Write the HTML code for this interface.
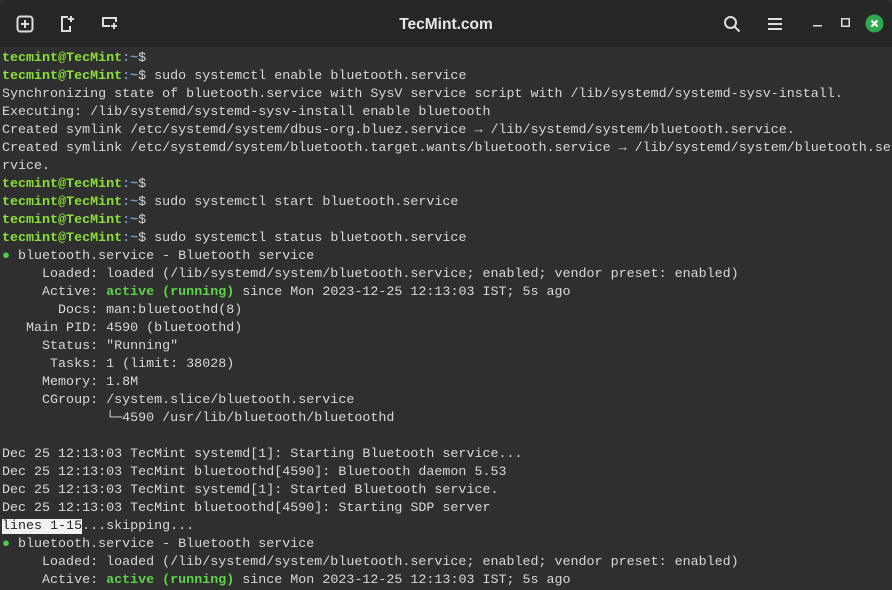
<!DOCTYPE html>
<html><head><meta charset="utf-8"><style>
html,body{margin:0;padding:0;width:892px;height:579px;overflow:hidden;background:#2f2f2f}
.tb{position:absolute;left:0;top:0;width:892px;height:47px;background:#262626;border-radius:8px 8px 0 0}
.title{position:absolute;left:0;width:892px;top:16px;text-align:center;color:#e8e8e8;font:bold 15.5px "Liberation Sans",sans-serif}
.term{position:absolute;left:2px;top:50px;font-family:"Liberation Mono",monospace;font-size:13.35px;line-height:18px;color:#d8d8d8;white-space:pre}
.g{color:#8ae234;font-weight:bold}.b{color:#729fcf;font-weight:bold}.a{color:#5fd34a;font-weight:bold}.d{color:#4ec94a}
.hl{background:#f2f2f2;color:#222}
svg{position:absolute}
</style></head><body>
<div class="tb"></div>
<div class="title">TecMint.com</div>
<svg style="left:16px;top:15px" width="18" height="18" viewBox="0 0 18 18"><rect x="1.5" y="1.5" width="15" height="15" rx="3" fill="none" stroke="#ddd" stroke-width="2"/><path d="M9 5v8M5 9h8" stroke="#ddd" stroke-width="2"/></svg>
<svg style="left:60px;top:15px" width="16" height="18" viewBox="0 0 16 18"><path d="M8 2H2v14h8v-5" fill="none" stroke="#ddd" stroke-width="2"/><path d="M11 1v6M8 4h6" stroke="#ddd" stroke-width="2"/></svg>
<svg style="left:101px;top:16px" width="18" height="14" viewBox="0 0 18 14"><path d="M9 10H2V2h13v4" fill="none" stroke="#ddd" stroke-width="2"/><path d="M13 7v6M10 10h6" stroke="#ddd" stroke-width="2"/></svg>
<svg style="left:723px;top:15px" width="18" height="18" viewBox="0 0 18 18"><circle cx="7.5" cy="7.5" r="5.5" fill="none" stroke="#ddd" stroke-width="2"/><path d="M11.5 11.5l5 5" stroke="#ddd" stroke-width="2"/></svg>
<svg style="left:767px;top:17px" width="16" height="14" viewBox="0 0 16 14"><path d="M1 2h14M1 7h14M1 12h14" stroke="#ddd" stroke-width="2"/></svg>
<svg style="left:813px;top:25px" width="10" height="2"><rect width="9" height="1.5" fill="#ddd"/></svg>
<svg style="left:841px;top:18px" width="10" height="10"><rect x="0.75" y="0.75" width="7.5" height="7.5" fill="none" stroke="#ddd" stroke-width="1.5"/></svg>
<svg style="left:865px;top:14px" width="20" height="20" viewBox="0 0 20 20"><circle cx="9.5" cy="9.5" r="9" fill="#2fa84f"/><path d="M6.5 6.5l6 6M12.5 6.5l-6 6" stroke="#fff" stroke-width="2.2"/></svg>
<div class="term"><span class="g">tecmint@TecMint</span><span class="b">:~</span>$
<span class="g">tecmint@TecMint</span><span class="b">:~</span>$ sudo systemctl enable bluetooth.service
Synchronizing state of bluetooth.service with SysV service script with /lib/systemd/systemd-sysv-install.
Executing: /lib/systemd/systemd-sysv-install enable bluetooth
Created symlink /etc/systemd/system/dbus-org.bluez.service → /lib/systemd/system/bluetooth.service.
Created symlink /etc/systemd/system/bluetooth.target.wants/bluetooth.service → /lib/systemd/system/bluetooth.se
rvice.
<span class="g">tecmint@TecMint</span><span class="b">:~</span>$
<span class="g">tecmint@TecMint</span><span class="b">:~</span>$ sudo systemctl start bluetooth.service
<span class="g">tecmint@TecMint</span><span class="b">:~</span>$
<span class="g">tecmint@TecMint</span><span class="b">:~</span>$ sudo systemctl status bluetooth.service
<span class="d">●</span> bluetooth.service - Bluetooth service
     Loaded: loaded (/lib/systemd/system/bluetooth.service; enabled; vendor preset: enabled)
     Active: <span class="a">active (running)</span> since Mon 2023-12-25 12:13:03 IST; 5s ago
       Docs: man:bluetoothd(8)
   Main PID: 4590 (bluetoothd)
     Status: "Running"
      Tasks: 1 (limit: 38028)
     Memory: 1.8M
     CGroup: /system.slice/bluetooth.service
             └─4590 /usr/lib/bluetooth/bluetoothd

Dec 25 12:13:03 TecMint systemd[1]: Starting Bluetooth service...
Dec 25 12:13:03 TecMint bluetoothd[4590]: Bluetooth daemon 5.53
Dec 25 12:13:03 TecMint systemd[1]: Started Bluetooth service.
Dec 25 12:13:03 TecMint bluetoothd[4590]: Starting SDP server
<span class="hl">lines 1-15</span>...skipping...
<span class="d">●</span> bluetooth.service - Bluetooth service
     Loaded: loaded (/lib/systemd/system/bluetooth.service; enabled; vendor preset: enabled)
     Active: <span class="a">active (running)</span> since Mon 2023-12-25 12:13:03 IST; 5s ago</div>
</body></html>
